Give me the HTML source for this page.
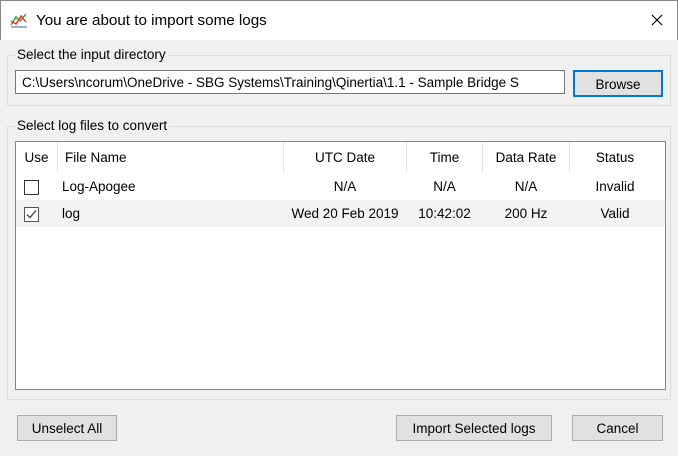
<!DOCTYPE html><html><head><style>
body{margin:0;width:678px;height:456px;overflow:hidden;background:#f0f0f0;font-family:"Liberation Sans",sans-serif;font-size:13.5px;color:#000;position:relative}
.a{position:absolute}
.title{left:0;top:0;width:676px;height:39px;background:#fff;border:1px solid #888;border-bottom:none}
.gb{border:1px solid #dcdcdc}
.lbl{background:#f0f0f0;padding:0 2px}
.btn{background:#e1e1e1;border:1px solid #adadad;text-align:center;line-height:25px;box-sizing:border-box}
.cell{top:0;height:31px;line-height:31px;text-align:center;border-right:1px solid #e5e5e5}
.r{text-align:center}
.cb{width:13px;height:13px;border:1px solid #333;background:#fff}
</style></head><body>
<div class="a title"></div>
<svg class="a" style="left:10px;top:12px" width="18" height="16"><path d="M1 13 L6 5 L10 9 L16 2" stroke="#3a3" fill="none" stroke-width="1.5"/><path d="M1 9 L6 12 L11 4 L16 10" stroke="#e33" fill="none" stroke-width="1.5"/><path d="M1 15 H17" stroke="#369" stroke-width="1"/></svg>
<div class="a" style="left:36px;top:12px;font-size:15.2px">You are about to import some logs</div>
<svg class="a" style="left:651px;top:14px" width="12" height="12"><path d="M1 1L11 11M11 1L1 11" stroke="#000" stroke-width="1.2"/></svg>
<div class="a gb" style="left:7px;top:55px;width:662px;height:49px"></div>
<div class="a lbl" style="left:15px;top:47px">Select the input directory</div>
<div class="a" style="left:15px;top:70px;height:24px;background:#fff;border:1px solid #7a7a7a;line-height:24px;padding-left:6px;white-space:nowrap;overflow:hidden;box-sizing:border-box;width:550px">C:\Users\ncorum\OneDrive - SBG Systems\Training\Qinertia\1.1 - Sample Bridge S</div>
<div class="a btn" style="left:573px;top:70px;width:90px;height:27px;border:2px solid #0078d7;line-height:25px">Browse</div>
<div class="a gb" style="left:7px;top:126px;width:662px;height:272px"></div>
<div class="a lbl" style="left:15px;top:118px">Select log files to convert</div>
<div class="a" style="left:15px;top:141px;width:649px;height:247px;background:#fff;border:1px solid #828790">
<div class="a cell" style="left:0;width:41px">Use</div>
<div class="a cell" style="left:42px;text-align:left;padding-left:7px;width:218px">File Name</div>
<div class="a cell" style="left:268px;width:122px">UTC Date</div>
<div class="a cell" style="left:391px;width:75px">Time</div>
<div class="a cell" style="left:467px;width:86px">Data Rate</div>
<div class="a cell" style="left:554px;width:90px;border:none">Status</div>
<div class="a" style="left:0;top:58px;width:649px;height:27px;background:#f3f3f3"></div>
<div class="a cb" style="left:8px;top:38px"></div>
<div class="a cb" style="left:8px;top:65px;border-color:#555"><svg width="13" height="13" style="position:absolute;left:0;top:0"><path d="M2 6.5L5 9.5L11 2.5" stroke="#333" fill="none" stroke-width="1.2"/></svg></div>
<div class="a" style="left:46px;top:37px">Log-Apogee</div>
<div class="a" style="left:46px;top:64px">log</div>
<div class="a r" style="left:268px;width:122px;top:37px">N/A</div>
<div class="a r" style="left:391px;width:75px;top:37px">N/A</div>
<div class="a r" style="left:467px;width:86px;top:37px">N/A</div>
<div class="a r" style="left:554px;width:90px;top:37px">Invalid</div>
<div class="a r" style="left:268px;width:122px;top:64px">Wed 20 Feb 2019</div>
<div class="a r" style="left:391px;width:75px;top:64px">10:42:02</div>
<div class="a r" style="left:467px;width:86px;top:64px">200 Hz</div>
<div class="a r" style="left:554px;width:90px;top:64px">Valid</div>
</div>
<div class="a btn" style="left:17px;top:415px;width:100px;height:26px">Unselect All</div>
<div class="a btn" style="left:396px;top:415px;width:156px;height:26px">Import Selected logs</div>
<div class="a btn" style="left:572px;top:415px;width:91px;height:26px">Cancel</div>
</body></html>
